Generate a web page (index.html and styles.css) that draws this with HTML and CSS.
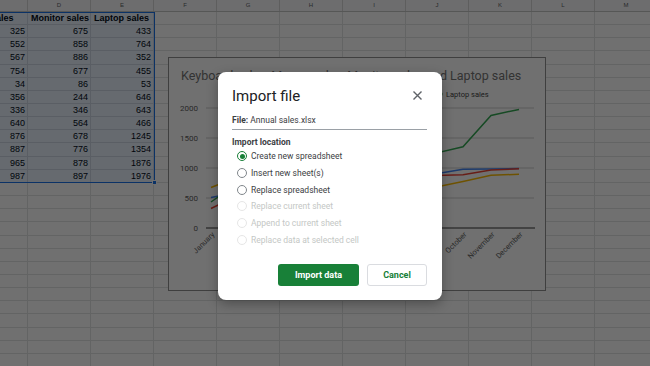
FILE: index.html
```html
<!DOCTYPE html>
<html lang="en">
<head>
  <meta charset="UTF-8" />
  <title>Import file</title>
  <link rel="stylesheet" href="styles.css">
</head>
<body>
  <div class="page">
    <!-- Spreadsheet behind the dialog -->
    <div class="sheet">
      <div class="col-heads">
        <span>C</span><span>D</span><span>E</span><span>F</span><span>G</span><span>H</span>
        <span>I</span><span>J</span><span>K</span><span>L</span><span>M</span>
      </div>
      <div class="cells">
        <div class="row head"><span>Mouse sales</span><span>Monitor sales</span><span>Laptop sales</span></div>
        <div class="row"><span>325</span><span>675</span><span>433</span></div>
        <div class="row"><span>552</span><span>858</span><span>764</span></div>
        <div class="row"><span>567</span><span>886</span><span>352</span></div>
        <div class="row"><span>754</span><span>677</span><span>455</span></div>
        <div class="row"><span>34</span><span>86</span><span>53</span></div>
        <div class="row"><span>356</span><span>244</span><span>646</span></div>
        <div class="row"><span>336</span><span>346</span><span>643</span></div>
        <div class="row"><span>640</span><span>564</span><span>466</span></div>
        <div class="row"><span>876</span><span>678</span><span>1245</span></div>
        <div class="row"><span>887</span><span>776</span><span>1354</span></div>
        <div class="row"><span>965</span><span>878</span><span>1876</span></div>
        <div class="row"><span>987</span><span>897</span><span>1976</span></div>
        <div class="selection"><i class="handle"></i></div>
      </div>
    </div>

    <!-- Floating chart -->
    <div class="chart">
      <svg width="377" height="234" viewBox="0 0 377 234">
        <text class="chart-title" x="12" y="22">Keyboard sales, Mouse sales, Monitor sales and Laptop sales</text>
        <g class="legend">
          <circle cx="96" cy="36" r="2.5" fill="#4285f4"/><text x="101" y="38.5">Keyboard sales</text>
          <circle cx="156" cy="36" r="2.5" fill="#ea4335"/><text x="161" y="38.5">Mouse sales</text>
          <circle cx="208" cy="36" r="2.5" fill="#fbbc04"/><text x="213" y="38.5">Monitor sales</text>
          <circle cx="271" cy="36" r="2.5" fill="#34a853"/><text x="277" y="38.5">Laptop sales</text>
        </g>
        <g class="grid">
          <line x1="37" y1="50" x2="365" y2="50"/>
          <line x1="37" y1="80" x2="365" y2="80"/>
          <line x1="37" y1="110" x2="365" y2="110"/>
          <line x1="37" y1="140" x2="365" y2="140"/>
        </g>
        <line class="axis" x1="37" y1="170" x2="366" y2="170"/>
        <g class="y-labels">
          <text x="29" y="53">2000</text>
          <text x="29" y="83">1500</text>
          <text x="29" y="113">1000</text>
          <text x="29" y="143">500</text>
          <text x="29" y="173">0</text>
        </g>
        <g class="series">
          <polyline stroke="#4285f4" points="42,139.4 70,134 98,131.6 126,128 154,165.8 182,144.8 210,141.2 238,132.8 266,116 294,111.2 322,110.9 350,110.6"/>
          <polyline stroke="#ea4335" points="42,150.5 70,136.9 98,136 126,124.8 154,168 182,148.6 210,149.8 238,131.6 266,117.4 294,116.8 322,112.1 350,110.8"/>
          <polyline stroke="#fbbc04" points="42,129.5 70,118.5 98,116.8 126,129.4 154,164.8 182,155.4 210,149.2 238,136.2 266,129.3 294,123.4 322,117.3 350,116.2"/>
          <polyline stroke="#34a853" points="42,144 70,124.2 98,148.9 126,142.7 154,166.8 182,131.2 210,131.4 238,142 266,95.3 294,88.8 322,57.4 350,51.4"/>
        </g>
        <g class="x-labels">
          <text transform="rotate(-45 46 177)" x="46" y="177">January</text>
          <text transform="rotate(-45 74 177)" x="74" y="177">February</text>
          <text transform="rotate(-45 102 177)" x="102" y="177">March</text>
          <text transform="rotate(-45 130 177)" x="130" y="177">April</text>
          <text transform="rotate(-45 158 177)" x="158" y="177">May</text>
          <text transform="rotate(-45 186 177)" x="186" y="177">June</text>
          <text transform="rotate(-45 214 177)" x="214" y="177">July</text>
          <text transform="rotate(-45 242 177)" x="242" y="177">August</text>
          <text transform="rotate(-45 270 177)" x="270" y="177">September</text>
          <text transform="rotate(-45 298 177)" x="298" y="177">October</text>
          <text transform="rotate(-45 326 177)" x="326" y="177">November</text>
          <text transform="rotate(-45 354 177)" x="354" y="177">December</text>
        </g>
      </svg>
    </div>

    <!-- Modal -->
    <div class="overlay">
      <div class="dialog">
        <div class="dialog-head">
          <h2>Import file</h2>
          <button class="close" aria-label="Close">
            <svg width="9" height="9" viewBox="0 0 9 9"><path d="M0.5 0.5L8.5 8.5M8.5 0.5L0.5 8.5" stroke="#5f6368" stroke-width="1.4"/></svg>
          </button>
        </div>
        <div class="file-name"><b>File:</b> Annual sales.xlsx</div>
        <div class="section-label">Import location</div>
        <label class="option"><span class="radio checked"></span>Create new spreadsheet</label>
        <label class="option"><span class="radio"></span>Insert new sheet(s)</label>
        <label class="option"><span class="radio"></span>Replace spreadsheet</label>
        <label class="option disabled"><span class="radio"></span>Replace current sheet</label>
        <label class="option disabled"><span class="radio"></span>Append to current sheet</label>
        <label class="option disabled"><span class="radio"></span>Replace data at selected cell</label>
        <div class="actions">
          <button class="btn primary">Import data</button>
          <button class="btn secondary">Cancel</button>
        </div>
      </div>
    </div>
  </div>
</body>
</html>
```

FILE: styles.css
```css
* {
  box-sizing: border-box;
}

body {
  margin: 0;
  background: #fff;
  font-family: "Liberation Sans", Arial, sans-serif;
}

.page {
  position: relative;
  width: 650px;
  height: 366px;
  overflow: hidden;
}

/* Sheet */
.sheet {
  margin-left: -35px;
  width: 700px;
}

.col-heads {
  display: grid;
  grid-template-columns: repeat(11, 63px);
  height: 12px;
  background: #f8f9fa;
  border-bottom: 1px solid #c4c7c5;
}

.col-heads span {
  font-size: 6px;
  line-height: 11px;
  color: #5f6368;
  text-align: center;
  border-right: 1px solid #d6d6d6;
}

.cells {
  position: relative;
  height: 354px;
  background-image:
    repeating-linear-gradient(to bottom, transparent 0 12.15px, #e2e3e3 12.15px 13.15px),
    repeating-linear-gradient(to right, transparent 0 62px, #e2e3e3 62px 63px);
}

.row {
  display: grid;
  grid-template-columns: 63px 63px 63px;
  height: 13.15px;
}

.row span {
  font-size: 9px;
  line-height: 13px;
  color: #000;
  text-align: right;
  padding-right: 3px;
  white-space: nowrap;
  overflow: hidden;
}

.row.head span {
  font-weight: bold;
  text-align: left;
  padding: 0 0 0 3px;
}

.row.head span:first-child {
  padding-left: 0;
  text-indent: -5px;
}

.selection {
  position: absolute;
  left: 0;
  top: 0;
  width: 190px;
  height: 171px;
  background: rgba(26, 115, 232, 0.1);
  border: 1px solid #1a73e8;
}

.handle {
  position: absolute;
  right: -3px;
  bottom: -3px;
  width: 5px;
  height: 5px;
  background: #1a73e8;
  border: 1px solid #fff;
}

/* Chart */
.chart {
  position: absolute;
  left: 168px;
  top: 57px;
  width: 378px;
  height: 234px;
  background: #fff;
  border: 1px solid #8f8f8f;
}

.chart svg {
  display: block;
  font-family: Roboto, sans-serif;
}

.chart-title {
  font-size: 12.5px;
  fill: #757575;
}

.legend text {
  font-size: 7.5px;
  fill: #444;
}

.grid line {
  stroke: #ccc;
  stroke-width: 1;
}

.axis {
  stroke: #333;
  stroke-width: 1;
}

.y-labels text {
  font-size: 8px;
  fill: #616161;
  text-anchor: end;
}

.x-labels text {
  font-size: 7.5px;
  fill: #616161;
  text-anchor: end;
}

.series polyline {
  fill: none;
  stroke-width: 1.5;
}

/* Dialog */
.overlay {
  position: absolute;
  inset: 0;
  background: rgba(0, 0, 0, 0.56);
  display: flex;
  justify-content: center;
  align-items: center;
  padding: 6px 0 0 10px;
}

.dialog {
  width: 224px;
  background: #fff;
  border-radius: 8px;
  padding: 14px 15px 14px 14px;
  box-shadow: 0 4px 12px rgba(0, 0, 0, 0.3);
  font-family: Roboto, "Liberation Sans", sans-serif;
  color: #3c4043;
}

.dialog-head {
  display: flex;
  justify-content: space-between;
  align-items: center;
  height: 20px;
}

.dialog-head h2 {
  margin: 0;
  font-size: 15px;
  font-weight: 400;
  color: #202124;
  line-height: 20px;
}

.close {
  width: 20px;
  height: 20px;
  padding: 0;
  border: none;
  background: none;
  display: flex;
  align-items: center;
  justify-content: center;
}

.file-name {
  margin-top: 8px;
  font-size: 8.5px;
  line-height: 12px;
  padding-bottom: 3px;
  border-bottom: 1px solid #9aa0a6;
}

.section-label {
  margin-top: 6px;
  font-size: 8.5px;
  line-height: 12px;
  font-weight: bold;
}

.option {
  display: flex;
  align-items: center;
  gap: 4px;
  height: 16.8px;
  padding-left: 5px;
  font-size: 8.5px;
  color: #3c4043;
}

.radio {
  width: 10px;
  height: 10px;
  border-radius: 50%;
  border: 1.3px solid #80868b;
  display: flex;
  align-items: center;
  justify-content: center;
}

.radio.checked {
  border-color: #188038;
}

.radio.checked::after {
  content: "";
  width: 5px;
  height: 5px;
  border-radius: 50%;
  background: #188038;
}

.option.disabled {
  color: #c4c7c5;
}

.option.disabled .radio {
  border-color: #e6e6e6;
}

.actions {
  display: flex;
  justify-content: flex-end;
  gap: 8px;
  margin-top: 16px;
}

.btn {
  height: 22px;
  border-radius: 3px;
  font-family: Roboto, sans-serif;
  font-size: 9px;
  font-weight: bold;
  cursor: pointer;
}

.primary {
  width: 81px;
  background: #188038;
  color: #fff;
  border: none;
}

.secondary {
  width: 60px;
  background: #fff;
  color: #188038;
  border: 1px solid #dadce0;
}
```
